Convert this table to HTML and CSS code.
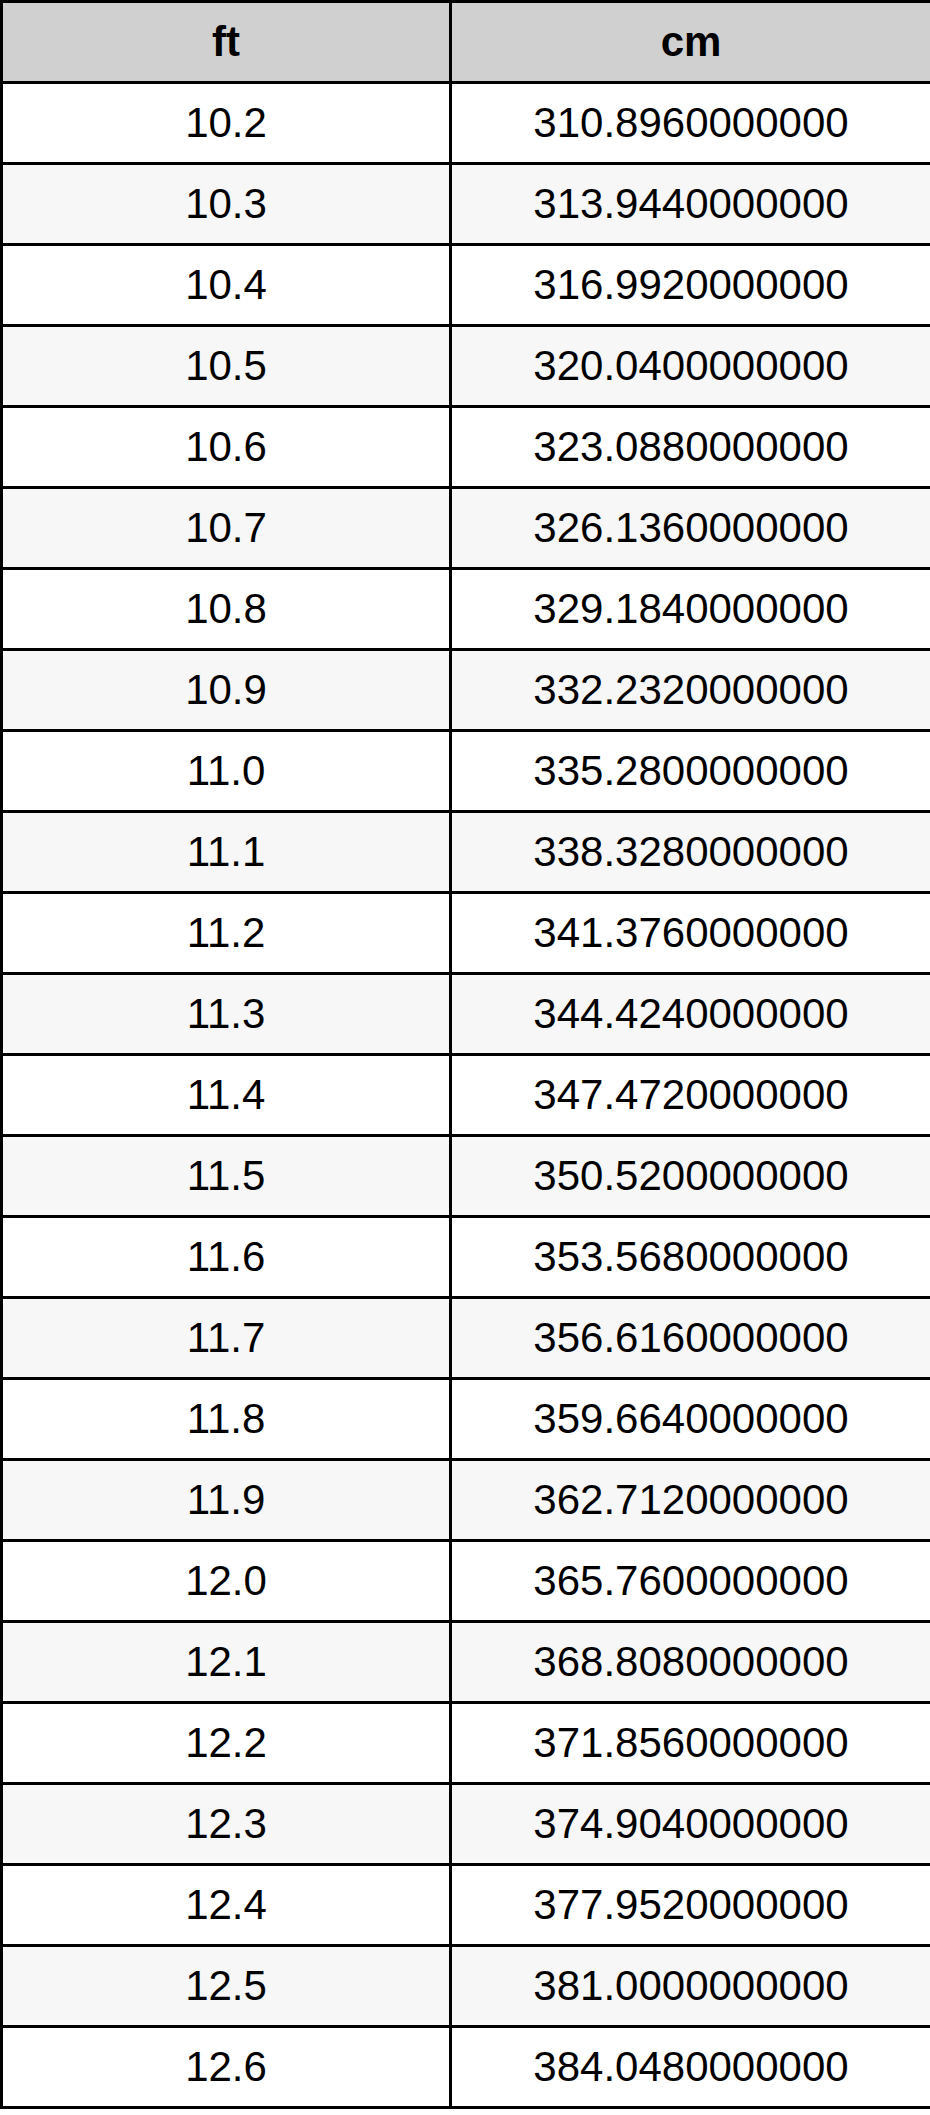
FILE: index.html
```html
<!DOCTYPE html>
<html>
<head>
<meta charset="utf-8">
<title>ft to cm</title>
<link rel="stylesheet" href="styles.css">
</head>
<body>
<table class="conv">
<colgroup><col class="c-ft"><col class="c-cm"></colgroup>
<thead>
<tr><th>ft</th><th>cm</th></tr>
</thead>
<tbody>
<tr><td>10.2</td><td>310.8960000000</td></tr>
<tr><td>10.3</td><td>313.9440000000</td></tr>
<tr><td>10.4</td><td>316.9920000000</td></tr>
<tr><td>10.5</td><td>320.0400000000</td></tr>
<tr><td>10.6</td><td>323.0880000000</td></tr>
<tr><td>10.7</td><td>326.1360000000</td></tr>
<tr><td>10.8</td><td>329.1840000000</td></tr>
<tr><td>10.9</td><td>332.2320000000</td></tr>
<tr><td>11.0</td><td>335.2800000000</td></tr>
<tr><td>11.1</td><td>338.3280000000</td></tr>
<tr><td>11.2</td><td>341.3760000000</td></tr>
<tr><td>11.3</td><td>344.4240000000</td></tr>
<tr><td>11.4</td><td>347.4720000000</td></tr>
<tr><td>11.5</td><td>350.5200000000</td></tr>
<tr><td>11.6</td><td>353.5680000000</td></tr>
<tr><td>11.7</td><td>356.6160000000</td></tr>
<tr><td>11.8</td><td>359.6640000000</td></tr>
<tr><td>11.9</td><td>362.7120000000</td></tr>
<tr><td>12.0</td><td>365.7600000000</td></tr>
<tr><td>12.1</td><td>368.8080000000</td></tr>
<tr><td>12.2</td><td>371.8560000000</td></tr>
<tr><td>12.3</td><td>374.9040000000</td></tr>
<tr><td>12.4</td><td>377.9520000000</td></tr>
<tr><td>12.5</td><td>381.0000000000</td></tr>
<tr><td>12.6</td><td>384.0480000000</td></tr>
</tbody>
</table>
</body>
</html>
```
FILE: styles.css
```css
html, body {
  margin: 0;
  padding: 0;
  background: #ffffff;
}

.conv {
  width: 930px;
  border-collapse: collapse;
  table-layout: fixed;
  font-family: "Liberation Sans", Arial, sans-serif;
  font-size: 42px;
  color: #000000;
}

.c-ft { width: 449px; }
.c-cm { width: 481px; }

.conv th,
.conv td {
  border: 3px solid #000000;
  height: 78px;
  padding: 0;
  text-align: center;
  vertical-align: middle;
  box-sizing: content-box;
}

.conv th {
  background: #d0d0d0;
  font-weight: bold;
}

.conv tbody tr:nth-child(even) td {
  background: #f7f7f7;
}

.conv tbody tr:nth-child(odd) td {
  background: #ffffff;
}
```
